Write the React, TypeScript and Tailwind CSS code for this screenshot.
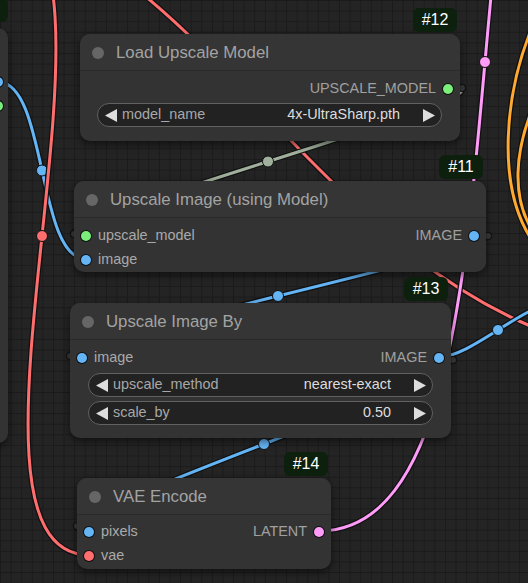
import React from 'react';

type Slot = { label: string; color: string };
type Widget = { name: string; value: string };

// ComfyUI style link: horizontal control points, offset = distance * 0.25
function linkPath(x1: number, y1: number, x2: number, y2: number) {
  const d = Math.hypot(x2 - x1, y2 - y1) * 0.25;
  return {
    d: `M${x1},${y1} C${x1 + d},${y1} ${x2 - d},${y2} ${x2},${y2}`,
    mx: (x1 + x2) / 2,
    my: (y1 + y2) / 2,
  };
}

const links = [
  { from: [450, 88], to: [86, 235], color: '#a0b09c' },
  { from: [474, 235], to: [82, 357], color: '#64b5f6' },
  { from: [439, 357], to: [89, 531], color: '#64b5f6' },
  { from: [-2, 82], to: [86, 259], color: '#64b5f6' },
  { from: [-5, -83], to: [89, 555], color: '#ff6e6e' },
  { from: [319, 531], to: [651, -407], color: '#ff9cf9' },
  { from: [439, 357], to: [557, 303], color: '#64b5f6' },
];

const freePaths = [
  { d: 'M140,-8 C200,40 250,100 312,162 S440,290 540,330', color: '#ff6e6e' },
  { d: 'M536,18 C504,90 494,190 536,246', color: '#ffa931' },
  { d: 'M536,100 C514,150 510,200 536,236', color: '#ffa931' },
];

const markers = [
  [462, 88],
  [488, 236],
  [74, 234],
  [70, 356],
  [453, 360],
  [77, 526],
];

function Links() {
  return (
    <svg className="absolute inset-0" width={528} height={583} viewBox="0 0 528 583">
      {freePaths.map((p, i) => (
        <g key={`f${i}`} fill="none">
          <path d={p.d} stroke="#111" strokeWidth={5.5} />
          <path d={p.d} stroke={p.color} strokeWidth={3} />
        </g>
      ))}
      {links.map((l, i) => {
        const p = linkPath(l.from[0], l.from[1], l.to[0], l.to[1]);
        return (
          <g key={i}>
            <path d={p.d} fill="none" stroke="#111" strokeWidth={5.5} />
            <path d={p.d} fill="none" stroke={l.color} strokeWidth={3} />
            <circle cx={p.mx} cy={p.my} r={5.5} fill={l.color} stroke="#111" strokeWidth={1} />
          </g>
        );
      })}
      {markers.map((m, i) => (
        <circle key={`m${i}`} cx={m[0]} cy={m[1]} r={3.5} fill="#3a3a3a" stroke="#111" strokeWidth={1.2} />
      ))}
    </svg>
  );
}

function Dot({ color }: { color: string }) {
  return <span className={`block w-[10px] h-[10px] rounded-full shrink-0 ring-1 ring-black/70 ${color}`} />;
}

function Arrow({ dir }: { dir: 'l' | 'r' }) {
  return (
    <svg width={12} height={13} viewBox="0 0 12 13" className="shrink-0">
      {dir === 'l' ? <polygon points="12,0 12,13 0,6.5" fill="#dddddd" /> : <polygon points="0,0 0,13 12,6.5" fill="#dddddd" />}
    </svg>
  );
}

function WidgetRow({ w }: { w: Widget }) {
  return (
    <div className="flex items-center h-[24px] rounded-full border border-[#616161] bg-[#222222] pl-[7px] pr-[6px]">
      <Arrow dir="l" />
      <span className="ml-[5px] text-[#a8a8a8]">{w.name}</span>
      <span className="flex-1 text-right text-[#dddddd] mr-[23px]">{w.value}</span>
      <Arrow dir="r" />
    </div>
  );
}

function SlotRow({ input, output }: { input?: Slot; output?: Slot }) {
  return (
    <div className="flex items-center h-[24px]">
      {input && (
        <div className="flex items-center gap-[7px] pl-[7px]">
          <Dot color={input.color} />
          <span className="text-[#aaaaaa]">{input.label}</span>
        </div>
      )}
      <div className="flex-1" />
      {output && (
        <div className="flex items-center gap-[7px] pr-[7px]">
          <span className="text-[#a0a0a0]">{output.label}</span>
          <Dot color={output.color} />
        </div>
      )}
    </div>
  );
}

function Node({
  className,
  badge,
  title,
  rows,
  widgets = [],
  bodyClass,
  widgetClass,
}: {
  className: string;
  badge: string;
  title: string;
  rows: { input?: Slot; output?: Slot }[];
  widgets?: Widget[];
  bodyClass: string;
  widgetClass: string;
}) {
  return (
    <div className={`absolute rounded-[10px] bg-[#333333] shadow-[0_3px_8px_rgba(0,0,0,0.55)] ${className}`}>
      <div className="absolute -top-[26px] right-[3px] h-[24px] w-[44px] rounded-[6px] bg-[#0d1f0d] flex items-center justify-center text-white text-[16px]">
        {badge}
      </div>
      <div className="flex items-center h-[37px] pt-[2px] rounded-t-[10px] bg-[#353535] border-b border-[#2a2a2a] pl-[12px]">
        <span className="w-[12px] h-[12px] rounded-full bg-[#666666]" />
        <span className="ml-[12px] text-[16.8px] text-[#a3a3a3]">{title}</span>
      </div>
      <div className={`flex flex-col text-[14.4px] ${bodyClass}`}>
        {rows.map((r, i) => (
          <SlotRow key={i} input={r.input} output={r.output} />
        ))}
        {widgets.length > 0 && (
          <div className={`flex flex-col gap-[4px] ${widgetClass}`}>
            {widgets.map((w) => (
              <WidgetRow key={w.name} w={w} />
            ))}
          </div>
        )}
      </div>
    </div>
  );
}

const blue = 'bg-[#64b5f6]';
const green = 'bg-[#7af07a]';
const red = 'bg-[#ff6e6e]';
const pink = 'bg-[#ff9cf9]';

export default function App() {
  return (
    <div className="relative w-[528px] h-[583px] overflow-hidden bg-[#242424] bg-[linear-gradient(to_right,#1b1b1b_1px,transparent_1px),linear-gradient(to_bottom,#1b1b1b_1px,transparent_1px)] bg-[size:10.6px_10.6px] font-['Liberation_Sans',Arial,sans-serif]">
      <Links />

      {/* partial node at the left edge */}
      <div className="absolute left-[-34px] top-[-2px] h-[24px] w-[42px] rounded-[6px] bg-[#0d1f0d]" />
      <div className="absolute left-[-40px] top-[28px] w-[48px] h-[415px] rounded-[10px] bg-[#333333] shadow-[0_3px_8px_rgba(0,0,0,0.55)]" />
      <span className="absolute left-[-7px] top-[77px] w-[10px] h-[10px] rounded-full bg-[#64b5f6] ring-1 ring-black/70" />
      <span className="absolute left-[-7px] top-[101px] w-[10px] h-[10px] rounded-full bg-[#7af07a] ring-1 ring-black/70" />

      <Node
        className="left-[80px] top-[34px] w-[380px] h-[107px]"
        badge="#12"
        title="Load Upscale Model"
        rows={[{ output: { label: 'UPSCALE_MODEL', color: green } }]}
        widgets={[{ name: 'model_name', value: '4x-UltraSharp.pth' }]}
        bodyClass="pt-[6px]"
        widgetClass="mt-[2px] ml-[17px] mr-[18px]"
      />

      <Node
        className="left-[74px] top-[181px] w-[412px] h-[91px]"
        badge="#11"
        title="Upscale Image (using Model)"
        rows={[
          { input: { label: 'upscale_model', color: green }, output: { label: 'IMAGE', color: blue } },
          { input: { label: 'image', color: blue } },
        ]}
        bodyClass="pt-[6px]"
        widgetClass=""
      />

      <Node
        className="left-[70px] top-[303px] w-[381px] h-[135px]"
        badge="#13"
        title="Upscale Image By"
        rows={[{ input: { label: 'image', color: blue }, output: { label: 'IMAGE', color: blue } }]}
        widgets={[
          { name: 'upscale_method', value: 'nearest-exact' },
          { name: 'scale_by', value: '0.50' },
        ]}
        bodyClass="pt-[6px]"
        widgetClass="mt-[3px] mx-[18px]"
      />

      <Node
        className="left-[77px] top-[478px] w-[254px] h-[91px]"
        badge="#14"
        title="VAE Encode"
        rows={[
          { input: { label: 'pixels', color: blue }, output: { label: 'LATENT', color: pink } },
          { input: { label: 'vae', color: red } },
        ]}
        bodyClass="pt-[5px]"
        widgetClass=""
      />
    </div>
  );
}
